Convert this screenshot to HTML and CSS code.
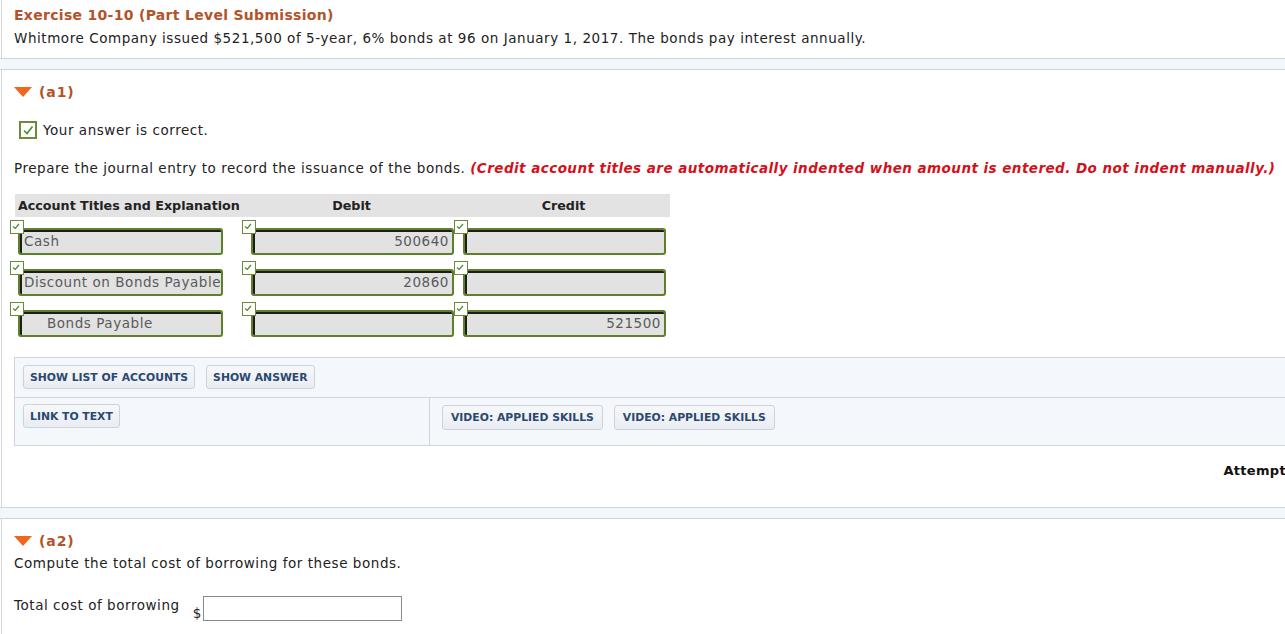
FILE: index.html
```html
<!DOCTYPE html>
<html>
<head>
<meta charset="utf-8">
<link rel="stylesheet" href="styles.css">
</head>
<body>
<div class="page">
  <div class="panel intro">
    <div class="title">Exercise 10-10 (Part Level Submission)</div>
    <div class="desc">Whitmore Company issued $521,500 of 5-year, 6% bonds at 96 on January 1, 2017. The bonds pay interest annually.</div>
  </div>
  <div class="band"></div>
  <div class="panel part a1">
    <div class="part-head"><span class="tri"></span><span class="part-label">(a1)</span></div>
    <div class="correct">
      <span class="bigcheck"><svg width="14" height="14" viewBox="0 0 14 14"><polyline points="3,7.5 6,10.5 11.5,3.5" fill="none" stroke="#4c8a2c" stroke-width="1.6"/></svg></span>
      <span>Your answer is correct.</span>
    </div>
    <p class="instr">Prepare the journal entry to record the issuance of the bonds. <em class="warn">(Credit account titles are automatically indented when amount is entered. Do not indent manually.)</em></p>
    <div class="journal">
      <div class="jhead">
        <div class="h-acct">Account Titles and Explanation</div>
        <div class="h-amt">Debit</div>
        <div class="h-amt">Credit</div>
      </div>
      <div class="jrow">
        <div class="cell c-acct"><span class="mini"><svg width="10" height="10" viewBox="0 0 10 10"><polyline points="2,5.5 4.2,7.5 8,3" fill="none" stroke="#4c8a2c" stroke-width="1.2"/></svg></span><div class="field">Cash</div></div>
        <div class="cell c-amt gapbig"><span class="mini"><svg width="10" height="10" viewBox="0 0 10 10"><polyline points="2,5.5 4.2,7.5 8,3" fill="none" stroke="#4c8a2c" stroke-width="1.2"/></svg></span><div class="field num">500640</div></div>
        <div class="cell c-amt"><span class="mini"><svg width="10" height="10" viewBox="0 0 10 10"><polyline points="2,5.5 4.2,7.5 8,3" fill="none" stroke="#4c8a2c" stroke-width="1.2"/></svg></span><div class="field num"></div></div>
      </div>
      <div class="jrow">
        <div class="cell c-acct"><span class="mini"><svg width="10" height="10" viewBox="0 0 10 10"><polyline points="2,5.5 4.2,7.5 8,3" fill="none" stroke="#4c8a2c" stroke-width="1.2"/></svg></span><div class="field">Discount on Bonds Payable</div></div>
        <div class="cell c-amt gapbig"><span class="mini"><svg width="10" height="10" viewBox="0 0 10 10"><polyline points="2,5.5 4.2,7.5 8,3" fill="none" stroke="#4c8a2c" stroke-width="1.2"/></svg></span><div class="field num">20860</div></div>
        <div class="cell c-amt"><span class="mini"><svg width="10" height="10" viewBox="0 0 10 10"><polyline points="2,5.5 4.2,7.5 8,3" fill="none" stroke="#4c8a2c" stroke-width="1.2"/></svg></span><div class="field num"></div></div>
      </div>
      <div class="jrow">
        <div class="cell c-acct"><span class="mini"><svg width="10" height="10" viewBox="0 0 10 10"><polyline points="2,5.5 4.2,7.5 8,3" fill="none" stroke="#4c8a2c" stroke-width="1.2"/></svg></span><div class="field indent">Bonds Payable</div></div>
        <div class="cell c-amt gapbig"><span class="mini"><svg width="10" height="10" viewBox="0 0 10 10"><polyline points="2,5.5 4.2,7.5 8,3" fill="none" stroke="#4c8a2c" stroke-width="1.2"/></svg></span><div class="field num"></div></div>
        <div class="cell c-amt"><span class="mini"><svg width="10" height="10" viewBox="0 0 10 10"><polyline points="2,5.5 4.2,7.5 8,3" fill="none" stroke="#4c8a2c" stroke-width="1.2"/></svg></span><div class="field num">521500</div></div>
      </div>
    </div>
    <div class="tools">
      <div class="tools-top">
        <span class="btn">SHOW LIST OF ACCOUNTS</span>
        <span class="btn">SHOW ANSWER</span>
      </div>
      <div class="tools-bottom">
        <div class="tools-left"><span class="btn">LINK TO TEXT</span></div>
        <div class="tools-right">
          <span class="btn wide">VIDEO: APPLIED SKILLS</span>
          <span class="btn wide">VIDEO: APPLIED SKILLS</span>
        </div>
      </div>
    </div>
    <div class="attempts">Attempts: 0 of 3 used</div>
  </div>
  <div class="band"></div>
  <div class="panel part a2">
    <div class="part-head"><span class="tri"></span><span class="part-label">(a2)</span></div>
    <p class="compute">Compute the total cost of borrowing for these bonds.</p>
    <div class="borrow">
      <span class="borrow-label">Total cost of borrowing</span>
      <span class="dollar">$</span>
      <span class="plain-input"></span>
    </div>
  </div>
</div>
</body>
</html>
```

FILE: styles.css
```css
html, body {
  margin: 0;
  padding: 0;
  overflow: hidden;
  background: #ffffff;
}
body {
  font-family: "DejaVu Sans", Verdana, sans-serif;
  font-size: 13.5px;
  letter-spacing: 0.55px;
  color: #222;
}
.page {
  width: 1389px;
}
.panel {
  margin-left: 1px;
  border-left: 1px solid #d3d7dc;
  background: #fff;
}
.intro {
  height: 58px;
  padding: 6px 0 0 12px;
  box-sizing: border-box;
}
.title {
  color: #b4532a;
  font-weight: bold;
  font-size: 14px;
  letter-spacing: 0.3px;
  line-height: 18px;
}
.desc {
  margin-top: 5px;
  line-height: 18px;
}
.band {
  height: 10px;
  background: #f3f6fa;
  border-top: 1px solid #cfd5dd;
  border-bottom: 1px solid #cfd5dd;
}
.part {
  padding: 0 0 0 12px;
}
.a1 {
  height: 437px;
  box-sizing: border-box;
  padding-top: 12px;
}
.part-head {
  display: flex;
  align-items: center;
  height: 20px;
}
.tri {
  width: 0;
  height: 0;
  border-left: 9px solid transparent;
  border-right: 9px solid transparent;
  border-top: 10px solid #f0661c;
  margin-right: 7px;
}
.part-label {
  color: #b4532a;
  font-weight: bold;
  font-size: 14px;
  letter-spacing: 0.9px;
}
.correct {
  display: flex;
  align-items: center;
  margin-top: 19px;
  margin-left: 5px;
  height: 18px;
}
.bigcheck {
  width: 14px;
  height: 14px;
  border: 2px solid #6b8b3a;
  background: #fff;
  display: inline-flex;
  margin-right: 6px;
}
.instr {
  margin: 20px 0 0 0;
  line-height: 18px;
}
.warn {
  color: #d4111b;
  font-weight: bold;
  letter-spacing: 0.45px;
}
.journal {
  margin-top: 17px;
  margin-left: 1px;
}
.jhead {
  display: flex;
  width: 655px;
  height: 23px;
  background: #e3e3e3;
  align-items: center;
  font-weight: bold;
  font-size: 12.7px;
  letter-spacing: 0;
  white-space: nowrap;
}
.h-acct {
  width: 223px;
  padding-left: 3px;
}
.h-amt {
  width: 203px;
  padding-left: 9px;
  text-align: center;
}
.jrow {
  display: flex;
  margin-left: -5px;
  margin-top: 6px;
}
.jhead + .jrow {
  margin-top: 3px;
}
.cell {
  position: relative;
  padding: 8px 0 0 8px;
}
.c-amt {
  padding-left: 9px;
}
.gapbig {
  margin-left: 19px;
}
.mini {
  position: absolute;
  left: 0;
  top: 0;
  width: 12px;
  height: 12px;
  border: 1px solid #6b8b3a;
  background: #fff;
  display: flex;
}
.field {
  box-sizing: border-box;
  height: 27px;
  border: 2px solid #5f7f2a;
  border-radius: 3px;
  box-shadow: inset 2px 2px 0 #1c1c1c;
  background: #e2e2e2;
  color: #5a5a5a;
  line-height: 23px;
  padding: 0 3px 0 4px;
  white-space: nowrap;
  overflow: hidden;
}
.c-acct .field {
  width: 205px;
}
.c-amt .field {
  width: 203px;
}
.num {
  text-align: right;
}
.indent {
  padding-left: 27px;
}
.tools {
  margin-top: 20px;
  background: #f4f7fb;
  border: 1px solid #cfd5dd;
  border-right: none;
}
.tools-top {
  display: flex;
  gap: 11px;
  padding: 7px 8px 0 8px;
  height: 32px;
  border-bottom: 1px solid #cfd5dd;
}
.tools-bottom {
  display: flex;
  height: 47px;
}
.tools-left {
  width: 406px;
  padding: 6px 0 0 8px;
  border-right: 1px solid #cfd5dd;
}
.tools-right {
  display: flex;
  gap: 11px;
  padding: 7px 0 0 12px;
}
.btn {
  display: inline-flex;
  align-items: center;
  height: 24px;
  box-sizing: border-box;
  padding: 0 6px;
  border: 1px solid #cdd3db;
  border-radius: 3px;
  background: linear-gradient(#f6f8fa, #e9edf2);
  color: #2a4870;
  font-size: 10.8px;
  letter-spacing: 0;
  font-weight: bold;
}
.btn.wide {
  padding: 0 8px;
  height: 25px;
}
.attempts {
  text-align: right;
  font-weight: bold;
  font-size: 13px;
  letter-spacing: 0.3px;
  color: #111;
  margin-top: 17px;
}
.a2 {
  padding-top: 12px;
  height: 116px;
  box-sizing: border-box;
}
.compute {
  margin: 3px 0 0 0;
  line-height: 18px;
}
.borrow {
  display: flex;
  align-items: flex-start;
  margin-top: 24px;
}
.borrow-label {
  line-height: 18px;
  margin-top: 0;
}
.dollar {
  margin-left: 13px;
  margin-top: 10px;
  line-height: 15px;
}
.plain-input {
  width: 199px;
  height: 25px;
  box-sizing: border-box;
  border: 1px solid #8a8a8a;
  background: #fff;
  margin-left: 1px;
}
```
